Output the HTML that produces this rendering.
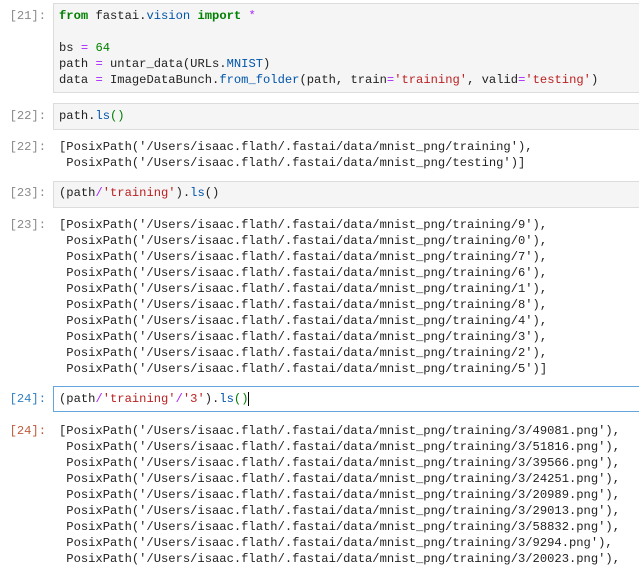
<!DOCTYPE html>
<html><head><style>
body{margin:0;width:639px;height:562px;overflow:hidden;background:#fff;font-family:"Liberation Mono",monospace;font-size:12.15px;color:#222;}
.p{position:absolute;right:593px;width:50px;text-align:right;color:#8a8a8a;line-height:16px}
.box{position:absolute;left:53px;right:-2px;background:#f5f5f5;border:1px solid #dcdcdc;}
.t{position:absolute;left:59px;white-space:pre;line-height:16px}
.k{color:#008000;font-weight:bold}.o{color:#a2f}.n{color:#008000}.b{color:#05a}.s{color:#ba2121}.g{color:#008000}
</style></head><body>
<div class="box" style="top:3px;height:88px"></div>
<div class="p" style="top:8px">[21]:</div>
<div class="t" style="top:8px"><span class="k">from</span> fastai.<span class="b">vision</span> <span class="k">import</span> <span class="o">*</span>

bs <span class="o">=</span> <span class="n">64</span>
path <span class="o">=</span> untar_data(URLs.<span class="b">MNIST</span>)
data <span class="o">=</span> ImageDataBunch.<span class="b">from_folder</span>(path, train<span class="o">=</span><span class="s">'training'</span>, valid<span class="o">=</span><span class="s">'testing'</span>)</div>

<div class="box" style="top:103px;height:25px"></div>
<div class="p" style="top:108px">[22]:</div>
<div class="t" style="top:108px">path.<span class="b">ls</span><span class="g">()</span></div>
<div class="p" style="top:139px">[22]:</div>
<div class="t" style="top:139px">[PosixPath('/Users/isaac.flath/.fastai/data/mnist_png/training'),
 PosixPath('/Users/isaac.flath/.fastai/data/mnist_png/testing')]</div>

<div class="box" style="top:181px;height:25px"></div>
<div class="p" style="top:185px">[23]:</div>
<div class="t" style="top:185px">(path<span class="o">/</span><span class="s">'training'</span>).<span class="b">ls</span>()</div>
<div class="p" style="top:217px">[23]:</div>
<div class="t" style="top:217px">[PosixPath('/Users/isaac.flath/.fastai/data/mnist_png/training/9'),
 PosixPath('/Users/isaac.flath/.fastai/data/mnist_png/training/0'),
 PosixPath('/Users/isaac.flath/.fastai/data/mnist_png/training/7'),
 PosixPath('/Users/isaac.flath/.fastai/data/mnist_png/training/6'),
 PosixPath('/Users/isaac.flath/.fastai/data/mnist_png/training/1'),
 PosixPath('/Users/isaac.flath/.fastai/data/mnist_png/training/8'),
 PosixPath('/Users/isaac.flath/.fastai/data/mnist_png/training/4'),
 PosixPath('/Users/isaac.flath/.fastai/data/mnist_png/training/3'),
 PosixPath('/Users/isaac.flath/.fastai/data/mnist_png/training/2'),
 PosixPath('/Users/isaac.flath/.fastai/data/mnist_png/training/5')]</div>

<div class="box" style="top:386px;height:24px;background:#fff;border-color:#64a5dd"></div>
<div class="p" style="top:391px;color:#307fc1">[24]:</div>
<div class="t" style="top:391px">(path<span class="o">/</span><span class="s">'training'</span><span class="o">/</span><span class="s">'3'</span>).<span class="b">ls</span><span class="g">()</span><span style="border-left:1px solid #000"></span></div>
<div class="p" style="top:423px;color:#bf5b3d">[24]:</div>
<div class="t" style="top:423px">[PosixPath('/Users/isaac.flath/.fastai/data/mnist_png/training/3/49081.png'),
 PosixPath('/Users/isaac.flath/.fastai/data/mnist_png/training/3/51816.png'),
 PosixPath('/Users/isaac.flath/.fastai/data/mnist_png/training/3/39566.png'),
 PosixPath('/Users/isaac.flath/.fastai/data/mnist_png/training/3/24251.png'),
 PosixPath('/Users/isaac.flath/.fastai/data/mnist_png/training/3/20989.png'),
 PosixPath('/Users/isaac.flath/.fastai/data/mnist_png/training/3/29013.png'),
 PosixPath('/Users/isaac.flath/.fastai/data/mnist_png/training/3/58832.png'),
 PosixPath('/Users/isaac.flath/.fastai/data/mnist_png/training/3/9294.png'),
 PosixPath('/Users/isaac.flath/.fastai/data/mnist_png/training/3/20023.png'),</div>
</body></html>
